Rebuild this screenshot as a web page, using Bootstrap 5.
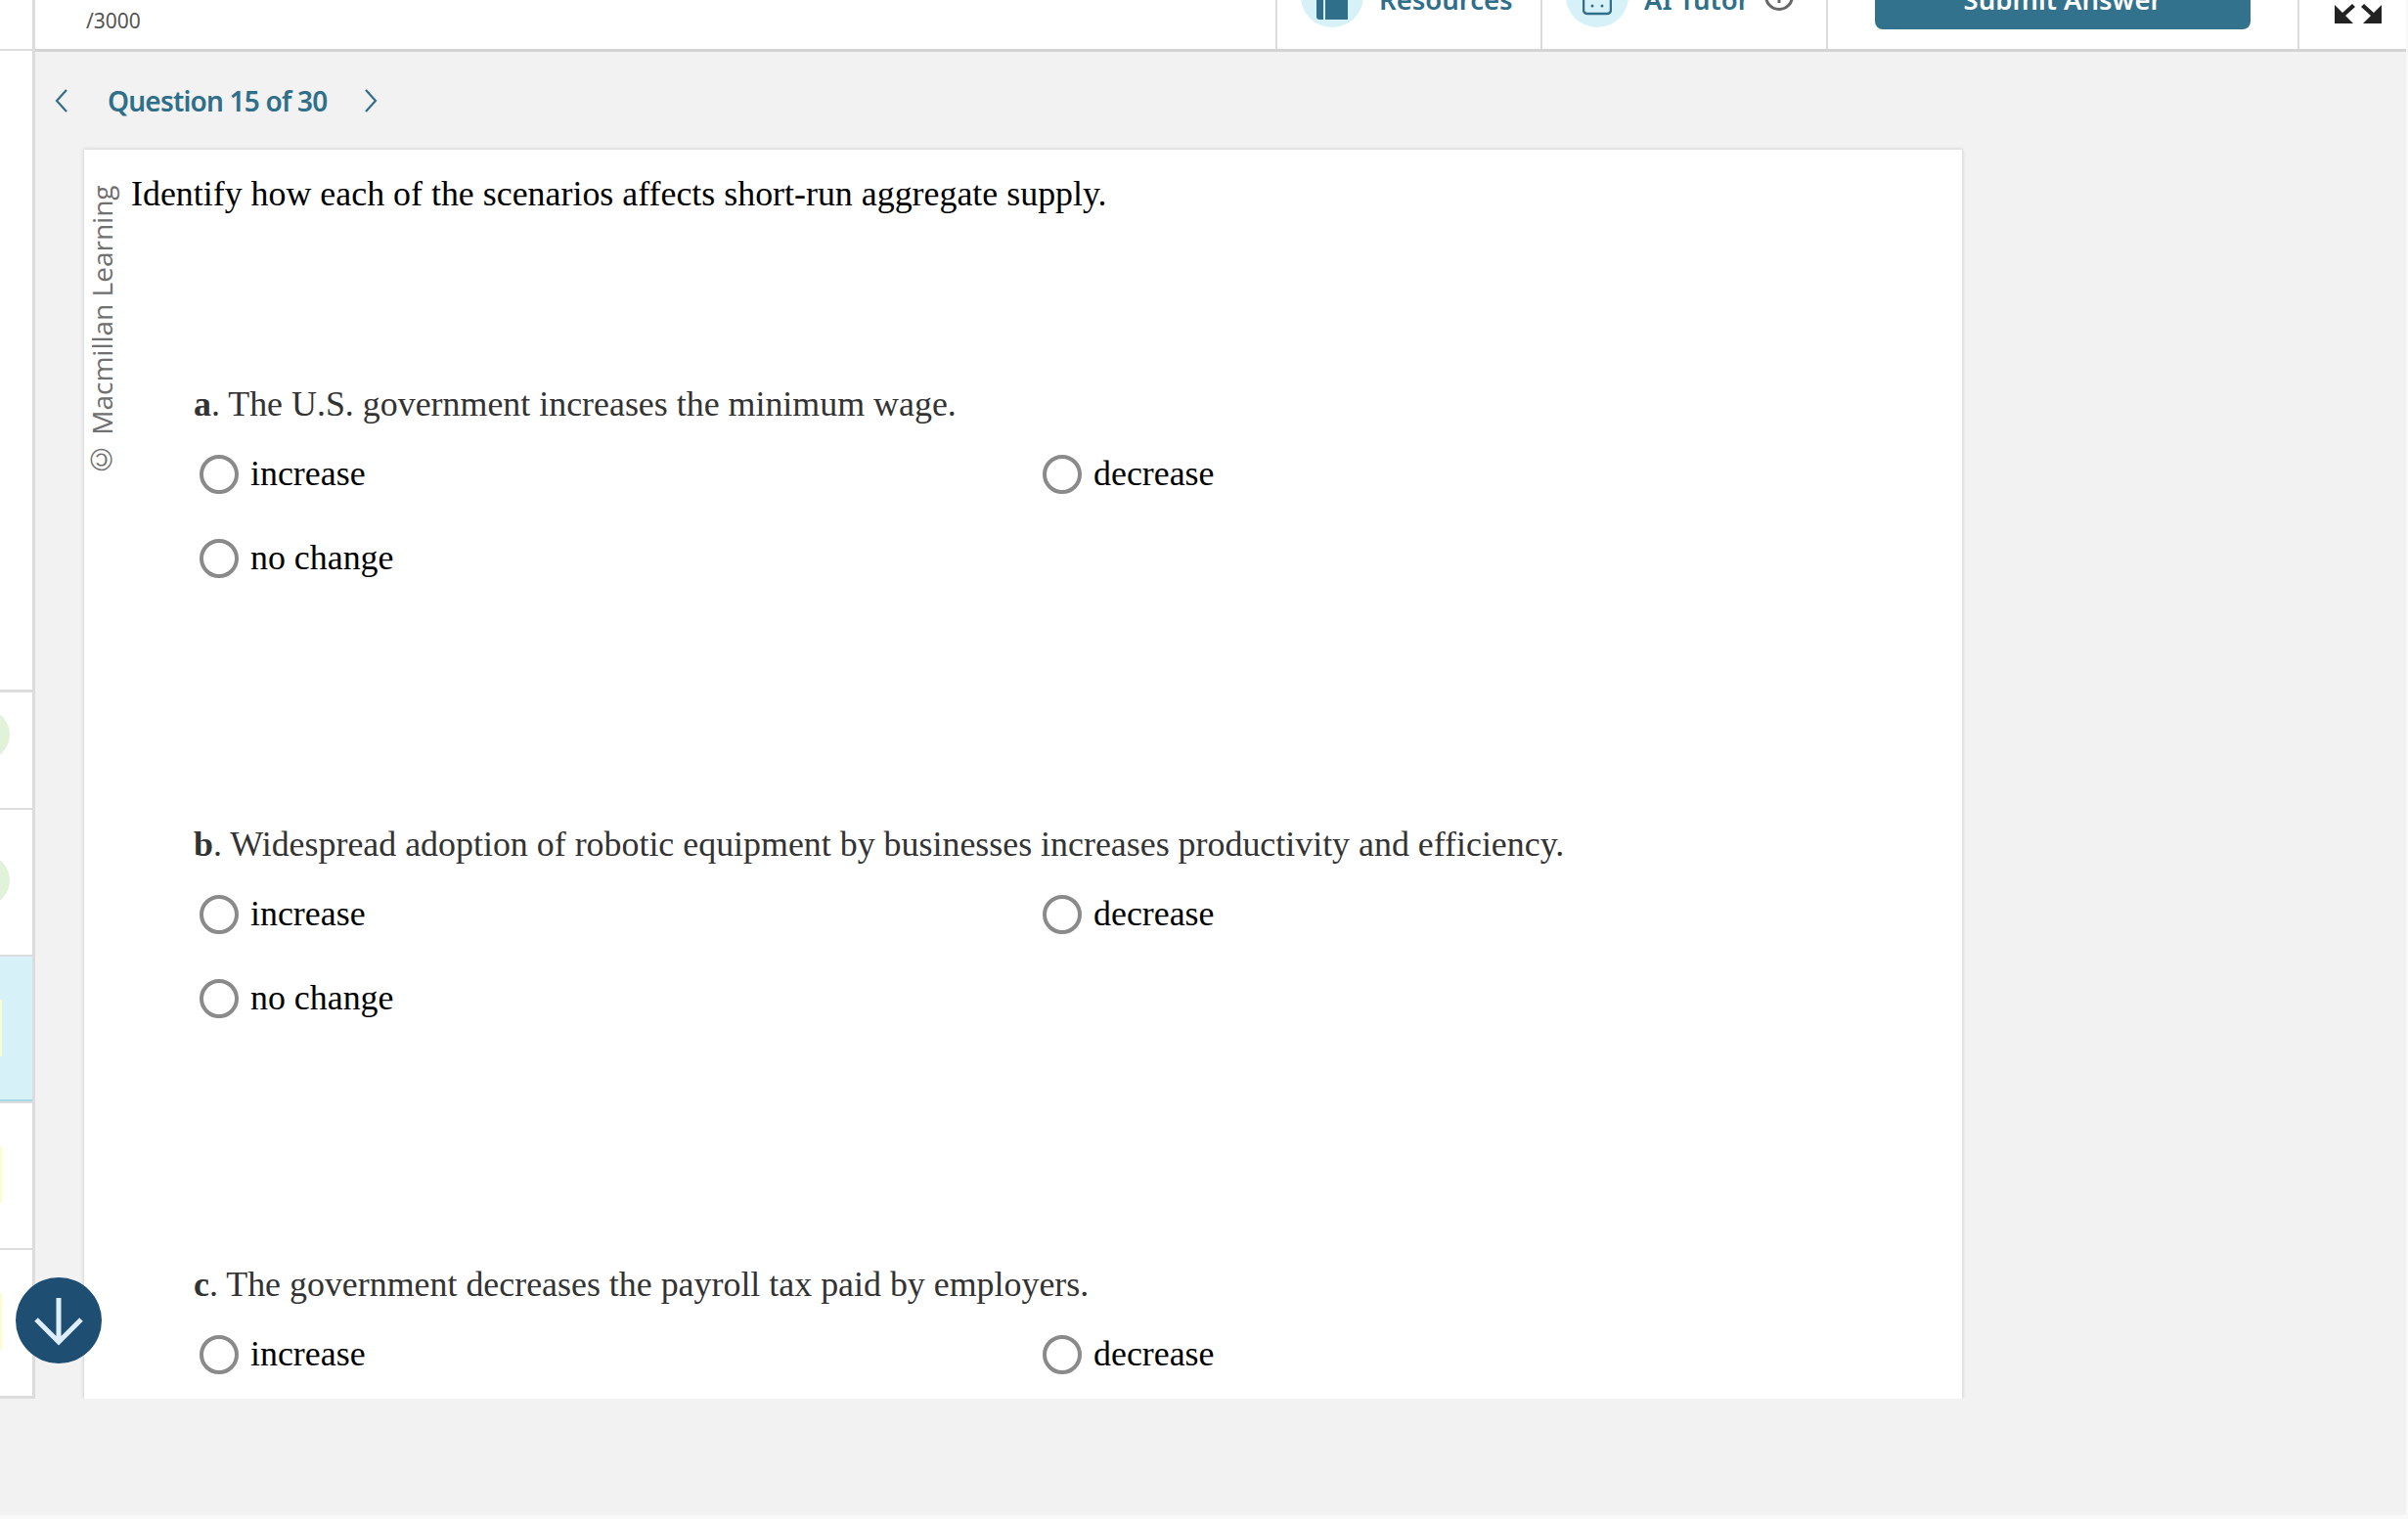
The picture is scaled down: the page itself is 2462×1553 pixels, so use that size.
<!DOCTYPE html>
<html lang="en">
<head>
    <meta charset="UTF-8">
    <title>Question 15 of 30</title>
    <link rel="stylesheet" href="https://cdn.jsdelivr.net/npm/bootstrap@5.3.0/dist/css/bootstrap.min.css">
    <style>
        html, body { height: 100%; }
        body { background: #f9f9f9; overflow: hidden; font-family: "Noto Sans", sans-serif; }
        .app-shell { height: 1549px; margin-right: 2px; overflow: hidden; background: #f2f2f2; }

        /* left question rail, mostly scrolled out of view */
        .rail { width: 36px; flex: none; height: 1430px; background: #fff; border-right: 3px solid #dcdcdc; border-bottom: 3px solid #dcdcdc; }
        .rail-top { height: 52px; border-bottom: 2px solid #dcdcdc; }
        .rail-gap { height: 653px; }
        .rail-item { height: 150px; border-top: 2px solid #dcdcdc; position: relative; overflow: hidden; }
        .rail-item.first { height: 121px; border-top-width: 3px; }
        .rail-item.active { background: #d7f1f8; border-bottom: 2px solid #a9d8e6; }
        .dot-green { position: absolute; left: -42px; top: 46px; width: 52px; height: 52px; border-radius: 50%; background: #e0f3d8; }
        .first .dot-green { top: 17px; }
        .dot-yellow { position: absolute; left: 0; top: 44px; width: 2px; height: 58px; background: #fdfbd0; }

        .topbar { height: 53px; background: #fff; border-bottom: 3px solid #d4d4d4; overflow: hidden; }
        .score { padding-left: 52px; font-size: 21px; color: #555; line-height: 1; padding-bottom: 18px; }
        .tool { height: 50px; border-left: 2px solid #dcdcdc; padding-bottom: 22px; }
        .tool-res { width: 271px; padding-left: 24px; }
        .tool-ai { width: 292px; padding-left: 24px; }
        .tool-submit { width: 482px; padding: 0 48px 20px; }
        .tool-expand { width: 111px; padding: 0 0 26px 36px; }
        .tool-circle { width: 64px; height: 64px; flex: none; border-radius: 50%; background: #d7f1f8; }
        .tool-label { font-size: 27.5px; font-weight: 600; color: #2f6f8a; line-height: 1; margin-left: 16px; margin-bottom: 15px; }
        .tool-info { margin-left: 15px; margin-bottom: 17px; }
        .btn-submit { width: 384px; height: 60px; line-height: 1; padding-bottom: 17px; background: #33728c; color: #fff; border: 0; border-radius: 0 0 8px 8px; font-size: 27.5px; font-weight: 600; }

        .question-nav { height: 100px; color: #2f6f8a; font-size: 28px; font-weight: 600; padding-left: 20px; }
        .question-label { margin: 0 38px 0 41px; letter-spacing: -0.8px; }

        .q-card { width: 1920px; height: 1277px; margin-left: 50px; background: #fff; box-shadow: 0 0 4px rgba(0,0,0,.2); clip-path: inset(-6px -6px 0 -6px); overflow: hidden; font-family: "Liberation Serif", serif; font-size: 35.9px; color: #000; }
        .credit { writing-mode: vertical-rl; transform: rotate(180deg); height: 300px; width: 48px; margin-top: 34px; flex: none; font-family: "Open Sans", sans-serif; font-size: 28px; font-weight: 500; color: #707070; line-height: 36px; white-space: nowrap; }
        .credit-mark { font-family: "Liberation Sans", sans-serif; font-size: 31px; }
        .prompt { padding-top: 22px; line-height: 46px; }
        .prompt-gap { height: 169px; }
        .scenario { height: 450px; padding-left: 64px; }
        .stem { color: #333; line-height: 46px; height: 46px; margin-bottom: 29px; }
        .choices { display: grid; grid-template-columns: 862px 1fr; row-gap: 46px; }
        .choice { display: flex; align-items: center; height: 40px; }
        .radio-mark { width: 40px; height: 40px; flex: none; border: 4px solid #8a8a8a; border-radius: 50%; margin: 0 12px 0 6px; background: #fff; }

        .scroll-down { position: absolute; left: 16px; top: 1306px; width: 88px; height: 88px; border-radius: 50%; background: #1f4e73; border: 0; padding: 0; }
    </style>
</head>
<body>
    <div class="app-shell d-flex position-relative">
        <!-- Question rail -->
        <div class="rail">
            <div class="rail-top"></div>
            <div class="rail-gap"></div>
            <div class="rail-item first"><span class="dot-green"></span></div>
            <div class="rail-item"><span class="dot-green"></span></div>
            <div class="rail-item active"><span class="dot-yellow"></span></div>
            <div class="rail-item"><span class="dot-yellow"></span></div>
            <div class="rail-item"><span class="dot-yellow"></span></div>
        </div>

        <div class="flex-grow-1 d-flex flex-column">
            <!-- Top bar, cut off by the scroll position -->
            <div class="topbar d-flex align-items-end justify-content-between">
                <div class="score">/3000</div>
                <div class="d-flex align-items-end">
                    <div class="tool tool-res d-flex align-items-end">
                        <span class="tool-circle d-flex align-items-end justify-content-center pb-2">
                            <svg width="32" height="40" viewBox="0 0 32 40"><path d="M7 0H3a3 3 0 0 0-3 3v34a3 3 0 0 0 3 3h4z" fill="#2f6f8a"/><rect x="9" y="0" width="23" height="40" fill="#2f6f8a"/></svg>
                        </span>
                        <span class="tool-label">Resources</span>
                    </div>
                    <div class="tool tool-ai d-flex align-items-end">
                        <span class="tool-circle d-flex align-items-end justify-content-center pb-2">
                            <svg class="mb-1" width="30" height="30" viewBox="0 0 30 30"><rect x="1" y="1" width="28" height="27" rx="4" fill="none" stroke="#2f6f8a" stroke-width="2.5"/><circle cx="10" cy="20" r="1.5" fill="#2f6f8a"/><circle cx="20" cy="20" r="1.5" fill="#2f6f8a"/></svg>
                        </span>
                        <span class="tool-label">AI Tutor</span>
                        <svg class="tool-info" width="30" height="30" viewBox="0 0 30 30"><circle cx="15" cy="15" r="13.5" fill="none" stroke="#666" stroke-width="3"/><rect x="13.5" y="10" width="3" height="12" fill="#666"/></svg>
                    </div>
                    <div class="tool tool-submit d-flex align-items-end">
                        <button class="btn-submit d-flex align-items-end justify-content-center" type="button">Submit Answer</button>
                    </div>
                    <div class="tool tool-expand d-flex align-items-end">
                        <svg width="48" height="20" viewBox="0 0 48 20"><path d="M0 1l8 8L18 0l3 3-10 9 8 8H0z" fill="#222"/><path d="M48 1l-8 8L30 0l-3 3 10 9-8 8h19z" fill="#222"/></svg>
                    </div>
                </div>
            </div>

            <!-- Question pager -->
            <div class="question-nav d-flex align-items-center">
                <svg width="13" height="24" viewBox="0 0 13 24"><path d="M12 1 2 12l10 11" fill="none" stroke="#2f6f8a" stroke-width="2.2"/></svg>
                <span class="question-label">Question 15 of 30</span>
                <svg width="13" height="24" viewBox="0 0 13 24"><path d="M1 1l10 11L1 23" fill="none" stroke="#2f6f8a" stroke-width="2.2"/></svg>
            </div>

            <!-- Question card -->
            <div class="q-card d-flex">
                <div class="credit"><span class="credit-mark">©</span> Macmillan Learning</div>
                <div class="flex-grow-1">
                    <div class="prompt">Identify how each of the scenarios affects short-run aggregate supply.</div>
                    <div class="prompt-gap"></div>
                    <div class="scenario">
                        <div class="stem"><b>a</b>. The U.S. government increases the minimum wage.</div>
                        <div class="choices">
                            <label class="choice"><span class="radio-mark"></span>increase</label>
                            <label class="choice"><span class="radio-mark"></span>decrease</label>
                            <label class="choice"><span class="radio-mark"></span>no change</label>
                        </div>
                    </div>
                    <div class="scenario">
                        <div class="stem"><b>b</b>. Widespread adoption of robotic equipment by businesses increases productivity and efficiency.</div>
                        <div class="choices">
                            <label class="choice"><span class="radio-mark"></span>increase</label>
                            <label class="choice"><span class="radio-mark"></span>decrease</label>
                            <label class="choice"><span class="radio-mark"></span>no change</label>
                        </div>
                    </div>
                    <div class="scenario">
                        <div class="stem"><b>c</b>. The government decreases the payroll tax paid by employers.</div>
                        <div class="choices">
                            <label class="choice"><span class="radio-mark"></span>increase</label>
                            <label class="choice"><span class="radio-mark"></span>decrease</label>
                        </div>
                    </div>
                </div>
            </div>
        </div>

        <button class="scroll-down d-flex align-items-center justify-content-center" type="button" aria-label="Scroll down">
            <svg width="52" height="52" viewBox="0 0 52 52"><path d="M26 3v44M3 25l23 23 23-23" fill="none" stroke="#deeefb" stroke-width="5"/></svg>
        </button>
    </div>
</body>
</html>
